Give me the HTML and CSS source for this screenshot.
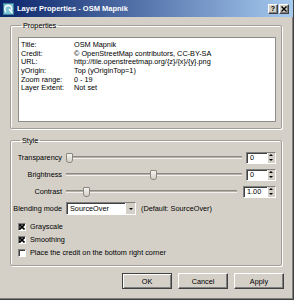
FILE: index.html
```html
<!DOCTYPE html>
<html lang="en">
<head>
    <meta charset="UTF-8">
    <title>Layer Properties - OSM Mapnik</title>
    <link rel="stylesheet" href="styles.css">
</head>
<body>
<div class="window">
    <div class="titlebar">
        <svg class="app-icon" width="11" height="12" viewBox="0 0 11 12">
            <rect x="0.5" y="0.5" width="10" height="11" fill="#7fc3d6" stroke="#3d7f96"/>
            <path d="M3 9 C1 7 1.5 3 4.5 2.5 C7.5 2 9.5 4.5 8.5 7 M6 6 L9.5 10" fill="none" stroke="#fff" stroke-width="1.4"/>
        </svg>
        <span class="title">Layer Properties - OSM Mapnik</span>
        <div class="tb-buttons">
            <span class="tb-btn">?</span>
            <span class="tb-btn">
                <svg width="6" height="6" viewBox="0 0 6 6"><path d="M0.5 0.5 L5.5 5.5 M5.5 0.5 L0.5 5.5" stroke="#000" stroke-width="1.4"/></svg>
            </span>
        </div>
    </div>

    <div class="content">
        <fieldset class="group props">
            <legend>Properties</legend>
            <div class="info">
                <span>Title:</span><span>OSM Mapnik</span>
                <span>Credit:</span><span>© OpenStreetMap contributors, CC-BY-SA</span>
                <span>URL:</span><span>http://tile.openstreetmap.org/{z}/{x}/{y}.png</span>
                <span>yOrigin:</span><span>Top (yOriginTop=1)</span>
                <span>Zoom range:</span><span>0 - 19</span>
                <span>Layer Extent:</span><span>Not set</span>
            </div>
        </fieldset>

        <fieldset class="group style">
            <legend>Style</legend>
            <div class="row">
                <label class="lbl">Transparency</label>
                <div class="slider"><div class="groove"></div><span class="handle" style="left: 0px"></span></div>
                <div class="spin"><span class="val">0</span><span class="arrows"><i class="up"></i><i class="down"></i></span></div>
            </div>
            <div class="row">
                <label class="lbl">Brightness</label>
                <div class="slider"><div class="groove"></div><span class="handle" style="left: 84px"></span></div>
                <div class="spin"><span class="val">0</span><span class="arrows"><i class="up"></i><i class="down"></i></span></div>
            </div>
            <div class="row">
                <label class="lbl">Contrast</label>
                <div class="slider short"><div class="groove"></div><span class="handle" style="left: 17px"></span></div>
                <div class="spin wide"><span class="val">1.00</span><span class="arrows"><i class="up"></i><i class="down"></i></span></div>
            </div>
            <div class="row">
                <label class="lbl">Blending mode</label>
                <div class="combo"><span class="val">SourceOver</span><span class="drop"><i></i></span></div>
                <span class="hint">(Default: SourceOver)</span>
            </div>
            <div class="check-row first">
                <span class="box"><svg width="6" height="6" viewBox="0 0 6 6"><path d="M0.5 0.5 L5.5 5.5 M5.5 0.5 L0.5 5.5" stroke="#000" stroke-width="1.6"/></svg></span>Grayscale
            </div>
            <div class="check-row">
                <span class="box"><svg width="6" height="6" viewBox="0 0 6 6"><path d="M0.5 0.5 L5.5 5.5 M5.5 0.5 L0.5 5.5" stroke="#000" stroke-width="1.6"/></svg></span>Smoothing
            </div>
            <div class="check-row"><span class="box"></span>Place the credit on the bottom right corner</div>
        </fieldset>

        <div class="buttons">
            <button class="default">OK</button>
            <button>Cancel</button>
            <button>Apply</button>
        </div>
    </div>
</div>
</body>
</html>
```

FILE: styles.css
```css
* {
    margin: 0;
    padding: 0;
    box-sizing: border-box;
}

body {
    font-family: 'Liberation Sans', Arial, sans-serif;
    font-size: 7.3px;
    color: #000;
    background: #d4d0c8;
}

.window {
    width: 294px;
    height: 300px;
    background: #d4d0c8;
    border-right: 1px solid #404040;
    border-bottom: 1px solid #404040;
    box-shadow: inset -1px -1px 0 #808080;
    display: flex;
    flex-direction: column;
}

.titlebar {
    height: 17px;
    background: linear-gradient(to right, #0a246a, #a6caf0);
    display: flex;
    align-items: center;
    padding: 0 4px 0 3px;
}

.app-icon {
    flex: none;
}

.title {
    margin-left: 3px;
    color: #fff;
    font-weight: bold;
    font-size: 7.5px;
    flex: 1;
}

.tb-buttons {
    display: flex;
    gap: 1px;
}

.tb-btn {
    width: 10px;
    height: 10px;
    background: #d4d0c8;
    border: 1px solid;
    border-color: #fff #404040 #404040 #fff;
    box-shadow: inset -1px -1px 0 #808080;
    display: flex;
    align-items: center;
    justify-content: center;
    font-weight: bold;
    font-size: 7px;
    line-height: 1;
}

.content {
    flex: 1;
    padding: 4px 11px 0 10px;
    display: flex;
    flex-direction: column;
}

.group {
    border: 1px solid #a19e97;
    border-radius: 2px;
    box-shadow: inset 1px 1px 0 #fff, 1px 1px 0 #fff;
}

.group legend {
    margin-left: 3px;
    padding: 0 2px;
    line-height: 9px;
}

.props {
    padding: 7px 5px 6px 7px;
}

.info {
    height: 85px;
    background: #fff;
    border: 1px solid #8e8c87;
    padding: 3px 2px;
    display: grid;
    grid-template-columns: 53px auto;
    grid-auto-rows: 8.67px;
    line-height: 8.67px;
    align-content: start;
    white-space: nowrap;
}

.style {
    margin-top: 7px;
    padding: 4px 5px 6px 6px;
}

.row {
    height: 17px;
    display: flex;
    align-items: center;
}

.lbl {
    width: 45px;
    margin-right: 4px;
    flex: none;
    display: flex;
    justify-content: flex-end;
    white-space: nowrap;
}

.slider {
    flex: 1;
    position: relative;
    height: 11px;
    display: flex;
    align-items: center;
    margin-right: 4px;
}

.slider.short {
    margin-right: 6px;
}

.groove {
    width: 100%;
    height: 3px;
    background: #b5b1a9;
    border-top: 1px solid #8d8a84;
    border-bottom: 1px solid #f2f1ee;
}

.handle {
    position: absolute;
    top: 1px;
    width: 7px;
    height: 10px;
    background: linear-gradient(#f4f3f0, #d4d0c8);
    border: 1px solid #8a877f;
    border-radius: 1px 1px 3px 3px;
}

.spin {
    width: 30px;
    height: 12px;
    background: #fff;
    border: 1px solid;
    border-color: #808080 #fff #fff #808080;
    box-shadow: inset 1px 1px 0 #404040;
    display: flex;
    flex: none;
}

.spin.wide {
    width: 33px;
}

.spin .val {
    flex: 1;
    padding-left: 3px;
    line-height: 10px;
}

.arrows {
    width: 8px;
    display: flex;
    flex-direction: column;
}

.arrows i {
    flex: 1;
    background: #d4d0c8;
    border-left: 1px solid #fff;
    position: relative;
}

.arrows i::after {
    content: "";
    position: absolute;
    left: 1px;
    border-left: 2.5px solid transparent;
    border-right: 2.5px solid transparent;
}

.arrows .up::after {
    top: 1px;
    border-bottom: 2.5px solid #000;
}

.arrows .down::after {
    top: 1px;
    border-top: 2.5px solid #000;
}

.combo {
    width: 70px;
    height: 13px;
    background: #fff;
    border: 1px solid;
    border-color: #808080 #fff #fff #808080;
    box-shadow: inset 1px 1px 0 #404040;
    display: flex;
    flex: none;
}

.combo .val {
    flex: 1;
    padding-left: 3px;
    line-height: 11px;
}

.drop {
    width: 10px;
    background: #d4d0c8;
    border-left: 1px solid #fff;
    display: flex;
    align-items: center;
    justify-content: center;
}

.drop i {
    border-left: 2.5px solid transparent;
    border-right: 2.5px solid transparent;
    border-top: 2.5px solid #000;
}

.hint {
    margin-left: 5px;
}

.check-row {
    height: 13px;
    display: flex;
    align-items: center;
    padding-left: 1px;
}

.check-row.first {
    margin-top: 3px;
}

.box {
    width: 8px;
    height: 8px;
    background: #fff;
    border: 1px solid;
    border-color: #808080 #fff #fff #808080;
    box-shadow: inset 1px 1px 0 #404040;
    margin-right: 4px;
    display: flex;
    align-items: center;
    justify-content: center;
    flex: none;
}

.buttons {
    margin-top: 7px;
    margin-right: -2px;
    display: flex;
    justify-content: flex-end;
    gap: 6px;
}

button {
    width: 50px;
    height: 16px;
    font-family: inherit;
    font-size: 7.3px;
    background: #d4d0c8;
    border: 1px solid;
    border-color: #fff #404040 #404040 #fff;
    box-shadow: inset -1px -1px 0 #808080;
    color: #000;
}

button.default {
    border-color: #404040;
    box-shadow: inset 1px 1px 0 #fff, inset -1px -1px 0 #808080;
}
```
